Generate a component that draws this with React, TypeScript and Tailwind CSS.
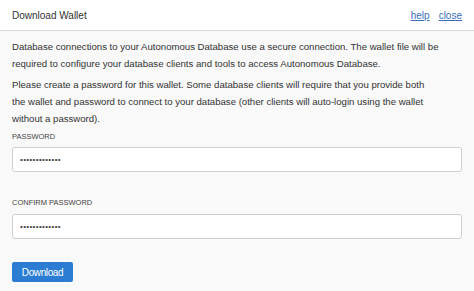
export default function App() {
  return (
    <div className="h-[291px] w-[474px] overflow-hidden bg-[#f9f9f9] font-['Liberation_Sans',Arial,sans-serif] text-[#333]">
      {/* Header */}
      <div className="flex h-[31px] items-center justify-between border-b border-[#dcdcdc] bg-white pl-3 pr-3">
        <span className="text-[10px]">Download Wallet</span>
        <div className="flex gap-[9px] text-[10px] text-[#3a6fb7]">
          <a className="underline" href="#">help</a>
          <a className="underline" href="#">close</a>
        </div>
      </div>

      {/* Body */}
      <div className="px-3 pt-[7px]">
        <p className="whitespace-nowrap text-[9.6px] leading-[17px]">
          Database connections to your Autonomous Database use a secure connection. The wallet file will be
          <br />
          required to configure your database clients and tools to access Autonomous Database.
        </p>
        <p className="mt-[4px] whitespace-nowrap text-[9.6px] leading-[17px]">
          Please create a password for this wallet. Some database clients will require that you provide both
          <br />
          the wallet and password to connect to your database (other clients will auto-login using the wallet
          <br />
          without a password).
        </p>

        <label className="mt-[5px] block text-[7.5px] leading-[10px] text-[#444]">PASSWORD</label>
        <input
          type="password"
          defaultValue="abcdefghijklm"
          className="mt-[5px] block h-[25px] w-full rounded-[3px] border border-[#cfcfcf] bg-white px-[7px] text-[8px] tracking-[0.35px] text-[#444] outline-none"
        />

        <label className="mt-[26px] block text-[7.5px] leading-[10px] text-[#444]">CONFIRM PASSWORD</label>
        <input
          type="password"
          defaultValue="abcdefghijklm"
          className="mt-[6px] block h-[25px] w-full rounded-[3px] border border-[#cfcfcf] bg-white px-[7px] text-[8px] tracking-[0.35px] text-[#444] outline-none"
        />

        <button className="mt-[23px] block h-[20px] w-[61px] rounded-[2px] bg-[#2b7cd3] text-[10px] tracking-[-0.4px] text-white">
          Download
        </button>
      </div>
    </div>
  );
}
